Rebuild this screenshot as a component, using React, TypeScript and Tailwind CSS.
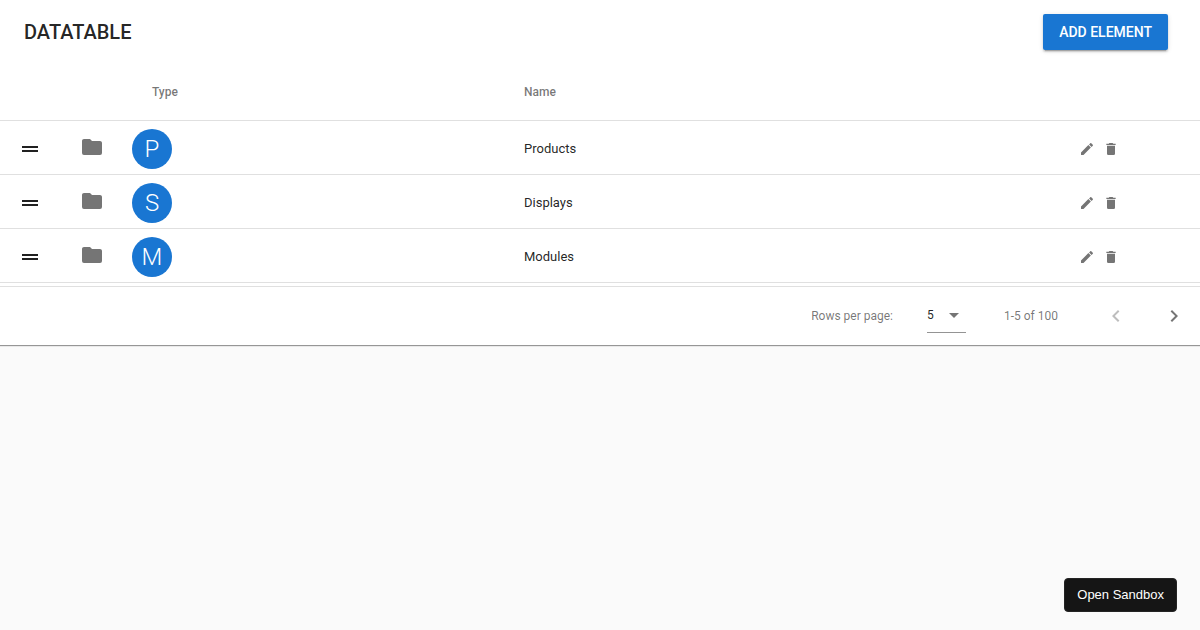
import { useState } from 'react';

type Row = { name: string; letter: string };

const rows: Row[] = [
  { name: 'Products', letter: 'P' },
  { name: 'Displays', letter: 'S' },
  { name: 'Modules', letter: 'M' },
];

const paths = {
  drag: 'M4 9h16v2H4zM4 13h16v2H4z',
  folder: 'M10 4H4c-1.11 0-2 .89-2 2v12a2 2 0 0 0 2 2h16a2 2 0 0 0 2-2V8c0-1.11-.9-2-2-2h-8l-2-2z',
  pencil:
    'M20.71 7.04c.39-.39.39-1.04 0-1.41l-2.34-2.34c-.37-.39-1.02-.39-1.41 0l-1.84 1.83 3.75 3.75M3 17.25V21h3.75L17.81 9.93l-3.75-3.75L3 17.25z',
  trash: 'M19 4h-3.5l-1-1h-5l-1 1H5v2h14M6 19a2 2 0 0 0 2 2h8a2 2 0 0 0 2-2V7H6v12z',
  caret: 'M7 10l5 5 5-5H7z',
  left: 'M15.41 16.58L10.83 12l4.58-4.59L14 6l-6 6 6 6 1.41-1.42z',
  right: 'M8.59 16.58L13.17 12 8.59 7.41 10 6l6 6-6 6-1.41-1.42z',
};

function Icon({ name, className }: { name: keyof typeof paths; className: string }) {
  return (
    <svg viewBox="0 0 24 24" fill="currentColor" aria-hidden="true" className={className}>
      <path d={paths[name]} />
    </svg>
  );
}

function TableRow({ row }: { row: Row }) {
  return (
    <tr className="h-[54px] border-b border-black/12 text-[13px]">
      <td className="pt-1">
        <Icon name="drag" className="mx-auto size-6" />
      </td>
      <td>
        <Icon name="folder" className="mx-auto size-6 text-[#757575]" />
      </td>
      <td className="pt-1 pl-2">
        <span className="flex size-10 items-center justify-center rounded-full bg-[#1976d2] text-2xl font-light text-white">
          {row.letter}
        </span>
      </td>
      <td className="pt-1">{row.name}</td>
      <td className="pt-1">
        <div className="flex gap-2 text-[#757575]">
          <button type="button" aria-label={`Edit ${row.name}`}>
            <Icon name="pencil" className="size-4" />
          </button>
          <button type="button" aria-label={`Delete ${row.name}`}>
            <Icon name="trash" className="size-4" />
          </button>
        </div>
      </td>
    </tr>
  );
}

function Pagination() {
  const [perPage, setPerPage] = useState('5');

  return (
    <footer className="flex h-[59px] items-center justify-end border-t border-black/12 pr-2 text-xs text-black/54">
      <label htmlFor="per-page">Rows per page:</label>
      <div className="relative ml-[34px] flex h-[34px] w-[39px] items-center border-b border-black/42">
        <select
          id="per-page"
          value={perPage}
          onChange={(e) => setPerPage(e.target.value)}
          className="w-full appearance-none bg-transparent text-black/87 outline-none"
        >
          <option value="5">5</option>
          <option value="10">10</option>
          <option value="25">25</option>
        </select>
        <Icon name="caret" className="pointer-events-none absolute right-0 size-6" />
      </div>
      <span className="ml-[38px]">1-5 of 100</span>
      <button type="button" disabled aria-label="Previous page" className="ml-10 p-1.5 text-black/26">
        <Icon name="left" className="size-6" />
      </button>
      <button type="button" aria-label="Next page" className="ml-[22px] p-1.5">
        <Icon name="right" className="size-6" />
      </button>
    </footer>
  );
}

export default function App() {
  return (
    <div className="min-h-screen bg-[#fafafa] font-[Roboto,sans-serif] text-black/87">
      <main className="bg-white shadow-[0_1px_1px_rgba(0,0,0,0.4)]">
        <header className="flex h-16 items-center justify-between pr-8 pl-6">
          <h1 className="text-xl font-medium">DATATABLE</h1>
          <button
            type="button"
            className="h-9 rounded-xs bg-[#1976d2] px-4 text-sm font-medium text-white shadow-[0_3px_1px_-2px_rgba(0,0,0,0.2),0_2px_2px_rgba(0,0,0,0.14),0_1px_5px_rgba(0,0,0,0.12)]"
          >
            ADD ELEMENT
          </button>
        </header>
        <table className="mb-[3px] w-full table-fixed border-collapse text-left">
          <thead>
            <tr className="h-14 border-b border-black/12 text-xs text-black/54">
              <th className="w-[60px]" aria-label="Reorder" />
              <th className="w-16" aria-label="Folder" />
              <th className="w-1/3 pl-7 font-medium">Type</th>
              <th className="font-medium">Name</th>
              <th className="w-[121px]" aria-label="Actions" />
            </tr>
          </thead>
          <tbody>
            {rows.map((row) => (
              <TableRow key={row.name} row={row} />
            ))}
          </tbody>
        </table>
        <Pagination />
      </main>
      <a
        href="#sandbox"
        className="fixed right-[23px] bottom-[18px] flex h-[34px] items-center rounded-sm border border-[#242424] bg-[#151515] px-3 font-['Liberation_Sans',sans-serif] text-[13px] text-white"
      >
        Open Sandbox
      </a>
    </div>
  );
}
